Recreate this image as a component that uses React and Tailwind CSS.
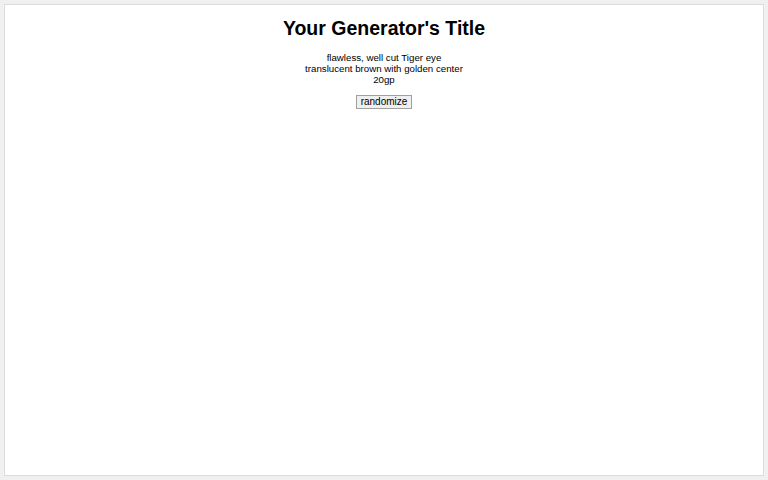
export default function App() {
  return (
    <div className="h-[480px] w-[768px] bg-[#f0f0f0] p-[4px]" style={{ fontFamily: '"Liberation Sans", Arial, sans-serif' }}>
      <div className="flex h-[472px] flex-col items-center border border-[#dcdcdc] bg-white">
        <h1 className="mt-[9px] text-[19.5px] font-bold leading-[28px] text-black">Your Generator's Title</h1>
        <div className="mt-[10px] text-center text-[9.7px] leading-[11px] text-black">
          <div>flawless, well cut Tiger eye</div>
          <div>translucent brown with golden center</div>
          <div>20gp</div>
        </div>
        <button className="mt-[10px] border border-[#a0a0a0] bg-[#efefef] px-[4px] text-[10px] leading-[12px] text-black">
          randomize
        </button>
      </div>
    </div>
  );
}
